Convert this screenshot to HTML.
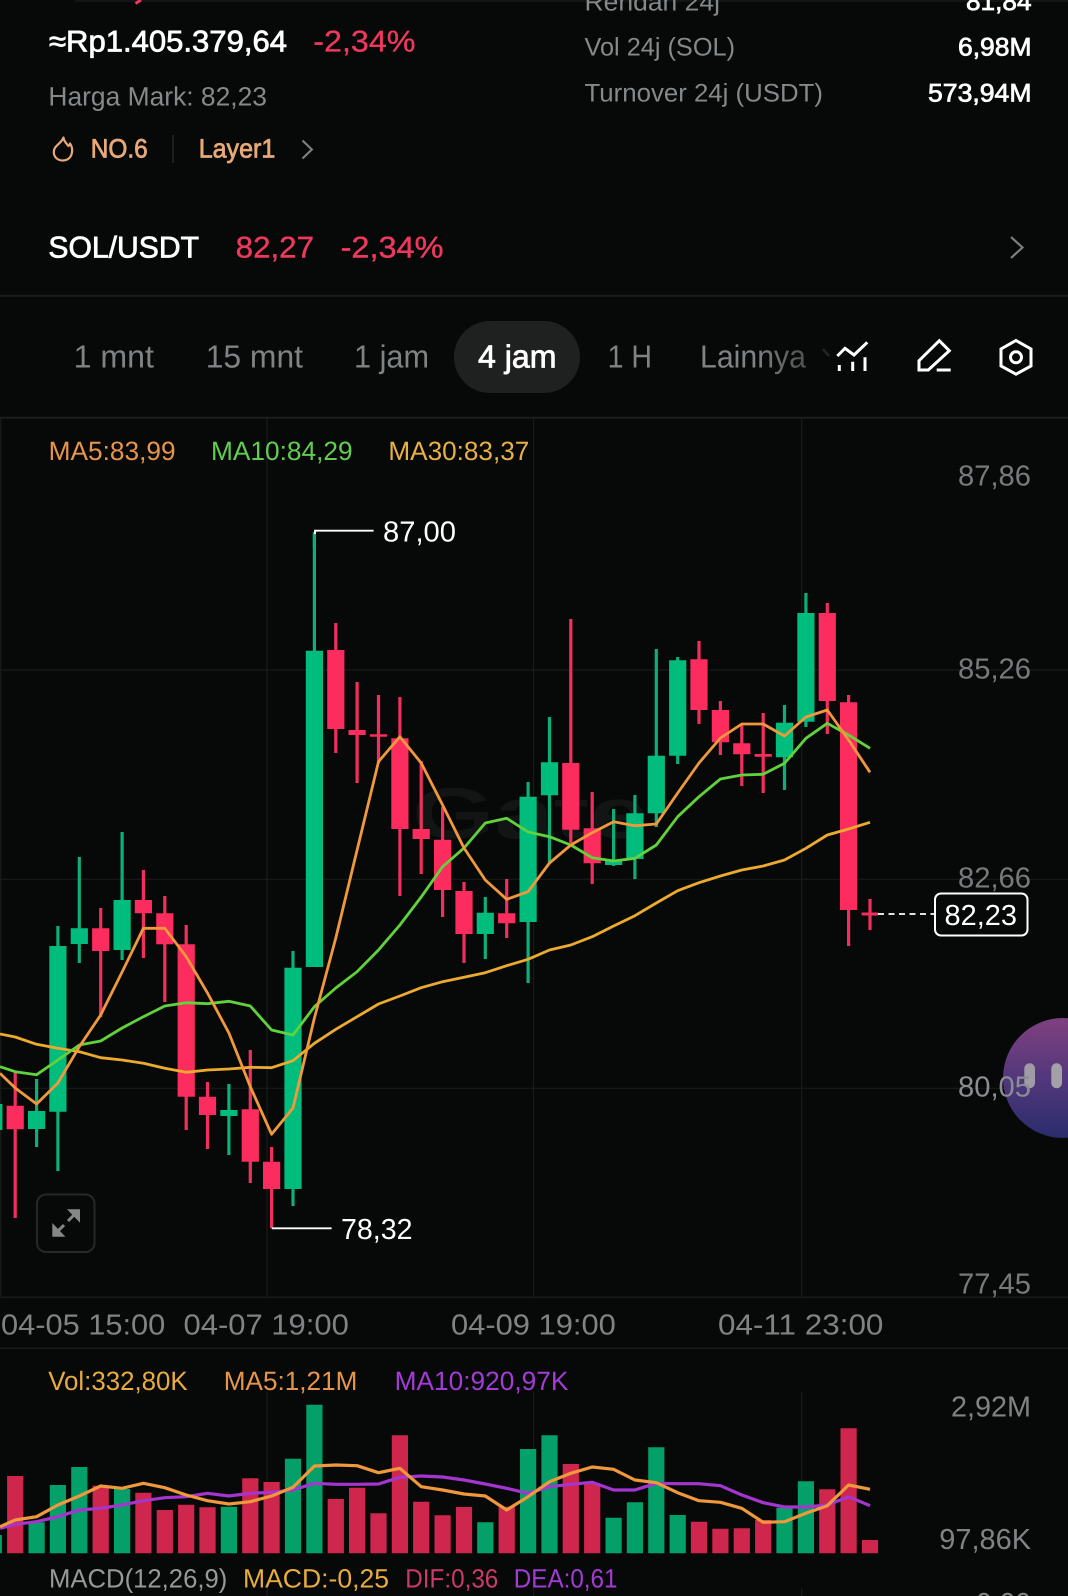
<!DOCTYPE html>
<html lang="id">
<head>
<meta charset="utf-8">
<title>SOL/USDT</title>
<style>
html,body{margin:0;padding:0;background:#070909;width:1068px;height:1596px;overflow:hidden}
svg{display:block}
text{font-family:"Liberation Sans",Arial,sans-serif;text-rendering:geometricPrecision}
.m{stroke-width:.75}
</style>
</head>
<body>
<svg width="1068" height="1596" viewBox="0 0 1068 1596" xmlns="http://www.w3.org/2000/svg">
<defs>
<linearGradient id="ball" x1="0" y1="0" x2="0" y2="1"><stop offset="0" stop-color="#80407f"/><stop offset=".5" stop-color="#52387c"/><stop offset="1" stop-color="#2a2c6c"/></linearGradient>
<linearGradient id="fade" gradientUnits="userSpaceOnUse" x1="755" y1="0" x2="808" y2="0"><stop offset="0" stop-color="#7f8384"/><stop offset="1" stop-color="#4a4c4d"/></linearGradient>
</defs>
<rect width="1068" height="1596" fill="#070909"/>

<!-- header -->
<path d="M75 1H1068" stroke="#131515" stroke-width="2"/>
<path d="M141 0L135.500 3.500" stroke="#f0385f" stroke-width="3" fill="none"/>
<text x="584.500" y="10.500" font-size="25.500" fill="#85898a" textLength="135.500" lengthAdjust="spacingAndGlyphs">Rendah 24j</text>
<text x="966" y="10" font-size="25.500" fill="#fff" stroke="#fff" class="m" textLength="65.500" lengthAdjust="spacingAndGlyphs">81,84</text>
<text x="584.500" y="55.700" font-size="25.500" fill="#85898a" textLength="150.500" lengthAdjust="spacingAndGlyphs">Vol 24j (SOL)</text>
<text x="958" y="55.700" font-size="25.500" fill="#fff" stroke="#fff" class="m" textLength="73.500" lengthAdjust="spacingAndGlyphs">6,98M</text>
<text x="584.500" y="101.700" font-size="25.500" fill="#85898a" textLength="238.500" lengthAdjust="spacingAndGlyphs">Turnover 24j (USDT)</text>
<text x="928" y="101.700" font-size="25.500" fill="#fff" stroke="#fff" class="m" textLength="103.500" lengthAdjust="spacingAndGlyphs">573,94M</text>

<text x="49" y="51.700" font-size="30" fill="#fff" stroke="#fff" class="m" textLength="238" lengthAdjust="spacingAndGlyphs">≈Rp1.405.379,64</text>
<text x="313.300" y="51.700" font-size="30" fill="#f0385f" stroke="#f0385f" stroke-width=".3" textLength="102.200" lengthAdjust="spacingAndGlyphs">-2,34%</text>
<text x="48.400" y="105.300" font-size="26.500" fill="#85898a" textLength="218.600" lengthAdjust="spacingAndGlyphs">Harga Mark: 82,23</text>

<path d="M63.500 137.500C64 142 67 144 68.500 146C69.500 145 70 144 70 143.500C72 146.500 72.500 149 72 152C71.500 157.500 67.500 160.500 62.800 160.500C57.500 160.500 53.800 157 53.800 152C53.800 147 58 145 60.500 142C62 140.500 63 139 63.500 137.500Z" fill="none" stroke="#e8a878" stroke-width="2.200" stroke-linejoin="round"/>
<text x="90.700" y="157.300" font-size="26.500" fill="#e8a878" stroke="#e8a878" class="m" textLength="57" lengthAdjust="spacingAndGlyphs">NO.6</text>
<path d="M173 135V163" stroke="#1d1f1f" stroke-width="2"/>
<text x="198.700" y="157.300" font-size="26.500" fill="#e8a878" stroke="#e8a878" class="m" textLength="76.600" lengthAdjust="spacingAndGlyphs">Layer1</text>
<path d="M302.500 140.500L311.800 149.500L302.500 158.500" fill="none" stroke="#7c7f80" stroke-width="2.200"/>

<text x="48.400" y="257.300" font-size="30" fill="#fff" stroke="#fff" class="m" textLength="150.600" lengthAdjust="spacingAndGlyphs">SOL/USDT</text>
<text x="235.700" y="257.300" font-size="30" fill="#f0385f" stroke="#f0385f" stroke-width=".4" textLength="78.300" lengthAdjust="spacingAndGlyphs">82,27</text>
<text x="340.600" y="257.300" font-size="30" fill="#f0385f" stroke="#f0385f" stroke-width=".4" textLength="102.900" lengthAdjust="spacingAndGlyphs">-2,34%</text>
<path d="M1011 237L1022.500 247.500L1011 258" fill="none" stroke="#7c7f80" stroke-width="2.200"/>

<path d="M0 295.700H1068M0 417.700H1068" stroke="#1c1e1e" stroke-width="2"/>

<!-- tabs -->
<rect x="454" y="321" width="126" height="72" rx="36" fill="#1f2020"/>
<text x="73.600" y="367.700" font-size="32" fill="#7f8384" textLength="80.400" lengthAdjust="spacingAndGlyphs">1 mnt</text>
<text x="205.700" y="367.700" font-size="32" fill="#7f8384" textLength="97.300" lengthAdjust="spacingAndGlyphs">15 mnt</text>
<text x="354" y="367.700" font-size="32" fill="#7f8384" textLength="75" lengthAdjust="spacingAndGlyphs">1 jam</text>
<text x="478" y="367.700" font-size="32" fill="#fff" stroke="#fff" class="m" textLength="78.500" lengthAdjust="spacingAndGlyphs">4 jam</text>
<text x="607.600" y="367.700" font-size="32" fill="#7f8384" textLength="44.400" lengthAdjust="spacingAndGlyphs">1 H</text>
<text x="700" y="367.700" font-size="32" fill="url(#fade)" textLength="106" lengthAdjust="spacingAndGlyphs">Lainnya</text>
<path d="M823 349L829 356" stroke="#222424" stroke-width="2.500"/>

<!-- toolbar icons -->
<g fill="none" stroke="#fff" stroke-width="3">
<path d="M837.300 356L845 348.300L854 355L867.300 342.300"/>
<path d="M839.300 365V371M852.700 361.700V371M865 357.300V371"/>
<path d="M939.300 340.700L949.300 350.700L928.300 370H919V360.700Z" stroke-linejoin="miter"/>
<path d="M936.700 370H950.700"/>
<path d="M1016 340.500L1031 349V366L1016 374.200L1001 366V349Z"/>
<circle cx="1016" cy="357.300" r="5.500"/>
</g>

<!-- grid -->
<g stroke="#191b1b" stroke-width="1.200" fill="none">
<path d="M0 670H1068M0 879.300H1068M0 1088.300H1068"/>
<path d="M0.700 418V1297M267 418V1297M533.500 418V1297M801.700 418V1297"/>
<path d="M267 1392V1553M533.500 1392V1553M801.700 1392V1553M801.700 1588V1596M267 1588V1596M533.500 1588V1596"/>
</g>
<path d="M0 1297.300H1068M0 1348.300H1068" stroke="#191b1b" stroke-width="1.500"/>

<!-- watermark -->
<text x="412" y="838" font-size="72" font-weight="bold" fill="#131515" textLength="236" lengthAdjust="spacingAndGlyphs">Gate</text>

<!-- candle wicks -->
<path fill="none" stroke="#0eae78" stroke-width="3.200" d="M36.600 1079V1147M57.900 926V1171M79.300 857V963M122.100 832V960M228.900 1084V1155M293 951V1206M314.400 532V660M485.300 897V959M528.100 782V983M549.500 717V863M613.600 809V866M634.900 795V879M656.300 649V827M677.700 657V764M784.500 705V790M805.900 593V727"/>
<path fill="none" stroke="#f02f5e" stroke-width="3.200" d="M15.200 1073V1218M100.700 908V1017M143.400 870V958M164.800 896V1002M186.200 925V1130M207.500 1082V1149M250.300 1050V1183M271.600 1147V1228M335.800 623V753M357.100 682V783M378.500 695V763M399.900 697V896M421.200 761V874M442.600 807V917M464 882V963M506.700 879V938M570.800 619V843M592.200 792V884M699 641V724M720.400 701V755M741.800 725V786M763.200 713V793M827.300 603V734M848.600 695V946M870 899V930"/>
<!-- candle bodies -->
<path fill="none" stroke="#00bd7d" stroke-width="17.200" d="M-6.200 1104V1130M36.600 1111V1129M57.900 946V1111.700M79.300 928.300V944M122.100 900V950M228.900 1110V1116M293 967.700V1189M314.400 650.700V967M485.300 912.700V934M528.100 796.700V922M549.500 762.300V795.300M613.600 860V865M634.900 813.300V859M656.300 755.700V813.300M677.700 660.300V755.700M784.500 722.700V757.300M805.900 613V721.700"/>
<path fill="none" stroke="#fd2c5e" stroke-width="17.200" d="M15.200 1105.700V1129.300M100.700 928.300V951M143.400 900V913.300M164.800 913.300V944.300M186.200 944.300V1096.700M207.500 1096.700V1115M250.300 1109.300V1161.700M271.600 1161.700V1189M335.800 650V729M357.100 730V735M378.500 734.300V736.700M399.900 738.300V829M421.200 829V839M442.600 839.700V890M464 891V934M506.700 913.300V923.300M570.800 763V829.700M592.200 828.300V863.300M699 659.300V710M720.400 710V742.300M741.800 743.300V754.300M763.200 754V756.700M827.300 613V701M848.600 702.300V910M870 912.700V914.700"/>

<!-- MA30 -->
<polyline fill="none" stroke="#ecab2e" stroke-width="2.800" stroke-linejoin="round" points="0,1034 15.200,1037 36.600,1044.300 57.900,1048.300 79.300,1051.700 100.700,1057.700 122.100,1060 143.400,1063.300 164.800,1068.300 186.200,1072.300 207.500,1070 228.900,1069 250.300,1067.300 271.600,1067.700 293,1060.700 314.400,1043.300 335.800,1029.300 357.100,1016.700 378.500,1004 399.900,996 421.200,987.700 442.600,981.700 464,977.300 485.300,972.700 506.700,965.700 528.100,959.300 549.500,950 570.800,945 592.200,936.700 613.600,926 634.900,915.700 656.300,903 677.700,890.700 699,882.700 720.400,876 741.800,870 763.200,866 784.500,860 805.900,848.300 827.300,835 848.600,829 870,822.300"/>
<!-- MA10 -->
<polyline fill="none" stroke="#62d23c" stroke-width="2.800" stroke-linejoin="round" points="0,1066.700 15.200,1071.700 36.600,1074.700 57.900,1060 79.300,1045 100.700,1041 122.100,1028 143.400,1016.700 164.800,1006 186.200,1002.700 207.500,1003.700 228.900,1001.300 250.300,1006 271.600,1030 293,1035 314.400,1006.700 335.800,988 357.100,971.700 378.500,950 399.900,925 421.200,897 442.600,866.700 464,848 485.300,823 506.700,818.300 528.100,832 549.500,836.700 570.800,845 592.200,857.700 613.600,861 634.900,858.300 656.300,845 677.700,816.700 699,796.700 720.400,779 741.800,775 763.200,774.300 784.500,763.300 805.900,738.300 827.300,723.300 848.600,735 870,748.300"/>
<!-- MA5 -->
<polyline fill="none" stroke="#f0983c" stroke-width="2.800" stroke-linejoin="round" points="0,1073.300 15.200,1088 36.600,1104 57.900,1083 79.300,1046.700 100.700,1015 122.100,972 143.400,928.300 164.800,928.300 186.200,956.700 207.500,993 228.900,1033 250.300,1086.700 271.600,1134.300 293,1108 314.400,1018 335.800,938 357.100,850 378.500,761.700 399.900,736.700 421.200,763 442.600,805 464,848 485.300,880 506.700,899.300 528.100,891.700 549.500,863 570.800,845 592.200,832.700 613.600,821.700 634.900,825.700 656.300,824 677.700,793 699,763 720.400,738 741.800,724 763.200,724 784.500,736 805.900,717 827.300,710 848.600,740 870,772.300"/>

<!-- chart text -->
<text x="48.600" y="460" font-size="26.500" fill="#e8954a" textLength="127" lengthAdjust="spacingAndGlyphs">MA5:83,99</text>
<text x="211" y="460" font-size="26.500" fill="#63cd52" textLength="141.600" lengthAdjust="spacingAndGlyphs">MA10:84,29</text>
<text x="388.400" y="460" font-size="26.500" fill="#e9b045" textLength="140.900" lengthAdjust="spacingAndGlyphs">MA30:83,37</text>

<path d="M315 548V530.700H373.600" fill="none" stroke="#fff" stroke-width="1.800"/>
<path d="M314.400 548V534" stroke="#0eae78" stroke-width="3.200"/>
<text x="383" y="541.700" font-size="29" fill="#fff" textLength="73" lengthAdjust="spacingAndGlyphs">87,00</text>
<path d="M271.700 1228.300H331.600" fill="none" stroke="#fff" stroke-width="1.800"/>
<text x="341" y="1239" font-size="29" fill="#fff" textLength="71.500" lengthAdjust="spacingAndGlyphs">78,32</text>

<!-- current price -->
<path d="M878 914H935" stroke="#fff" stroke-width="1.800" stroke-dasharray="6 4.500"/>
<path d="M862 914H878" stroke="#f02f5e" stroke-width="3"/>
<rect x="935" y="893.500" width="92.500" height="42" rx="6" fill="#070909" stroke="#fff" stroke-width="2"/>
<text x="944.500" y="925" font-size="29" fill="#fff" textLength="72.500" lengthAdjust="spacingAndGlyphs">82,23</text>

<!-- floating ball -->
<circle cx="1063" cy="1078" r="60" fill="url(#ball)"/>
<rect x="1024.300" y="1063.300" width="10.700" height="25" rx="5.300" fill="#a8a6aa" opacity=".9"/>
<rect x="1051.300" y="1063.300" width="10.700" height="25" rx="5.300" fill="#a8a6aa" opacity=".95"/>

<!-- axis labels -->
<g font-size="29" fill="#777a7b">
<text x="958" y="485.700" textLength="73" lengthAdjust="spacingAndGlyphs">87,86</text>
<text x="958" y="678.300" textLength="73" lengthAdjust="spacingAndGlyphs">85,26</text>
<text x="958" y="887.300" textLength="73" lengthAdjust="spacingAndGlyphs">82,66</text>
<text x="958" y="1096.700" fill="#8b8d92" textLength="73" lengthAdjust="spacingAndGlyphs">80,05</text>
<text x="958" y="1293.300" textLength="73" lengthAdjust="spacingAndGlyphs">77,45</text>
<text x="1" y="1334.300" fill="#808384" textLength="164.300" lengthAdjust="spacingAndGlyphs">04-05 15:00</text>
<text x="183.500" y="1334.300" fill="#808384" textLength="165.300" lengthAdjust="spacingAndGlyphs">04-07 19:00</text>
<text x="451" y="1334.300" fill="#808384" textLength="164.800" lengthAdjust="spacingAndGlyphs">04-09 19:00</text>
<text x="718" y="1334.300" fill="#808384" textLength="165.400" lengthAdjust="spacingAndGlyphs">04-11 23:00</text>
<text x="951" y="1416.700" fill="#808384" textLength="80" lengthAdjust="spacingAndGlyphs">2,92M</text>
<text x="939.300" y="1549" fill="#808384" textLength="91.700" lengthAdjust="spacingAndGlyphs">97,86K</text>
<text x="976" y="1613" fill="#808384" textLength="55" lengthAdjust="spacingAndGlyphs">0,00</text>
</g>

<!-- expand button -->
<rect x="37" y="1194.500" width="57.500" height="57.500" rx="9" fill="none" stroke="#262828" stroke-width="2"/>
<g fill="#858788">
<path d="M80 1209.300V1222.700L67 1209.300Z"/>
<path d="M52.300 1236.700V1223L65.400 1236.700Z"/>
</g>
<path d="M76 1213L68 1221M56 1233L64 1225" stroke="#858788" stroke-width="3"/>

<!-- volume bars -->
<path fill="none" stroke="#03a06a" stroke-width="16.200" d="M-6.200 1535V1553.300M36.600 1522.300V1553.300M57.900 1485V1553.300M79.300 1467V1553.300M122.100 1489V1553.300M228.900 1506.700V1553.300M293 1458.700V1553.300M314.400 1404.700V1553.300M485.300 1522.300V1553.300M528.100 1449V1553.300M549.500 1435.300V1553.300M613.600 1517.700V1553.300M634.900 1502.300V1553.300M656.300 1447.300V1553.300M677.700 1515V1553.300M784.500 1507.700V1553.300M805.900 1481.300V1553.300"/>
<path fill="none" stroke="#cf264d" stroke-width="16.200" d="M15.200 1476V1553.300M100.700 1485.700V1553.300M143.400 1492.700V1553.300M164.800 1510V1553.300M186.200 1504.700V1553.300M207.500 1507.300V1553.300M250.300 1478.300V1553.300M271.600 1482V1553.300M335.800 1499V1553.300M357.100 1487.700V1553.300M378.500 1513.300V1553.300M399.900 1435.300V1553.300M421.200 1501.700V1553.300M442.600 1515.300V1553.300M464 1507V1553.300M506.700 1506.700V1553.300M570.800 1464V1553.300M592.200 1483.300V1553.300M699 1521.700V1553.300M720.400 1528.700V1553.300M741.800 1528.300V1553.300M763.200 1520V1553.300M827.300 1489.300V1553.300M848.600 1428.300V1553.300M870 1540V1553.300"/>

<!-- volume MA lines -->
<polyline fill="none" stroke="#a535cf" stroke-width="3.200" stroke-linejoin="round" points="0,1528.300 15.200,1524.300 36.600,1521.700 57.900,1516.700 79.300,1510 100.700,1508.300 122.100,1505 143.400,1500.700 164.800,1497.700 186.200,1496.700 207.500,1493.300 228.900,1496 250.300,1493.300 271.600,1492.300 293,1490 314.400,1483.300 335.800,1484.300 357.100,1484.300 378.500,1484 399.900,1477.300 421.200,1476 442.600,1477 464,1480 485.300,1484 506.700,1488.300 528.100,1493.300 549.500,1486.700 570.800,1484.300 592.200,1482.300 613.600,1490 634.900,1490 656.300,1483.300 677.700,1483.700 699,1483.700 720.400,1485.700 741.800,1495 763.200,1502.700 784.500,1507 805.900,1507 827.300,1505 848.600,1496.700 870,1505.700"/>
<polyline fill="none" stroke="#f0983c" stroke-width="3.200" stroke-linejoin="round" points="0,1526.700 15.200,1520 36.600,1516.700 57.900,1505 79.300,1496 100.700,1486 122.100,1488.300 143.400,1483.300 164.800,1487.700 186.200,1495 207.500,1500.700 228.900,1504 250.300,1501.700 271.600,1496 293,1487.300 314.400,1466 335.800,1465 357.100,1465.700 378.500,1472.700 399.900,1468.300 421.200,1486.700 442.600,1490 464,1494 485.300,1496 506.700,1510 528.100,1496.700 549.500,1481.700 570.800,1473.300 592.200,1467 613.600,1469.300 634.900,1480 656.300,1482.700 677.700,1492.700 699,1500.700 720.400,1502.300 741.800,1508.300 763.200,1522.300 784.500,1521.700 805.900,1513.300 827.300,1505.700 848.600,1485 870,1489.300"/>

<!-- volume / MACD text -->
<text x="48.200" y="1390" font-size="26.500" fill="#e9ac3f" textLength="139.500" lengthAdjust="spacingAndGlyphs">Vol:332,80K</text>
<text x="223.800" y="1390" font-size="26.500" fill="#e8954a" textLength="133.600" lengthAdjust="spacingAndGlyphs">MA5:1,21M</text>
<text x="394.600" y="1390" font-size="26.500" fill="#a33cd6" textLength="173.800" lengthAdjust="spacingAndGlyphs">MA10:920,97K</text>
<text x="49" y="1587.300" font-size="26.500" fill="#96999a" textLength="178.300" lengthAdjust="spacingAndGlyphs">MACD(12,26,9)</text>
<text x="243" y="1587.300" font-size="26.500" fill="#e9ac3f" textLength="146" lengthAdjust="spacingAndGlyphs">MACD:-0,25</text>
<text x="405.300" y="1587.300" font-size="26.500" fill="#cc3a6a" textLength="93" lengthAdjust="spacingAndGlyphs">DIF:0,36</text>
<text x="513.800" y="1587.300" font-size="26.500" fill="#a33cd6" textLength="103.700" lengthAdjust="spacingAndGlyphs">DEA:0,61</text>
</svg>
</body>
</html>
